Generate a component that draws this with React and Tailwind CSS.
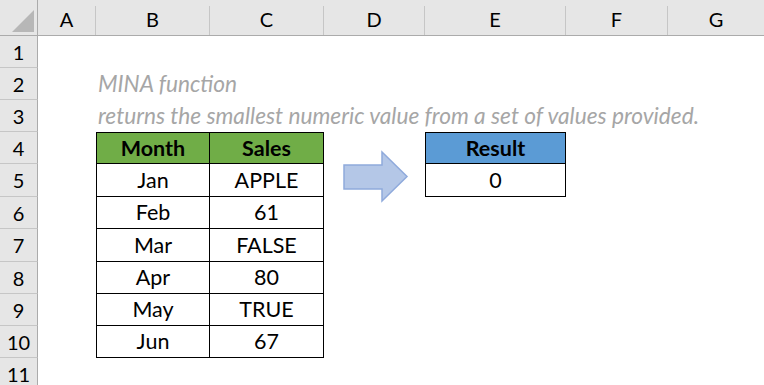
import React from 'react';

const font = { fontFamily: '"Lato", "Liberation Sans", sans-serif' };

// column widths in px, G takes whatever is left
const cols = [
    { name: 'A', w: 'w-[58px]' },
    { name: 'B', w: 'w-[114px]' },
    { name: 'C', w: 'w-[114px]' },
    { name: 'D', w: 'w-[101px]' },
    { name: 'E', w: 'w-[141px]' },
    { name: 'F', w: 'w-[102px]' },
];

const rowHeights = ['h-[32px]', 'h-[32px]', 'h-[32px]', 'h-[32px]', 'h-[33px]', 'h-[32px]', 'h-[33px]', 'h-[32px]', 'h-[32px]', 'h-[32px]', 'h-[32px]'];

const sales = [
    ['Jan', 'APPLE'],
    ['Feb', '61'],
    ['Mar', 'FALSE'],
    ['Apr', '80'],
    ['May', 'TRUE'],
    ['Jun', '67'],
];

const ColumnHeader = () => (
    <div className="flex h-[36px] bg-[#e6e6e6] border-b border-[#ababab]">
        <div className="w-[38px] shrink-0 flex items-start justify-end pt-[10px] pr-[3px] border-r border-[#ababab]">
            <svg width="22" height="22" viewBox="0 0 22 22">
                <polygon points="22,0 22,22 0,22" fill="#b7b7b7" />
            </svg>
        </div>
        {cols.map((c) => (
            <div key={c.name} className={`${c.w} shrink-0 flex`}>
                <div className="flex-1 flex items-center justify-center text-[20px] text-black pt-[2px]">{c.name}</div>
                <div className="w-px self-end h-[29px] bg-[#c6c6c6]" />
            </div>
        ))}
        <div className="flex-1 flex items-center justify-center text-[20px] text-black pt-[2px]">G</div>
    </div>
);

const RowNum = ({ n }) => (
    <div className="w-[38px] shrink-0 bg-[#e6e6e6] border-r border-b border-r-[#ababab] border-b-[#c6c6c6] flex items-center justify-center text-[20px] text-black">
        {n}
    </div>
);

const Cell = ({ w, className = '', children }) => (
    <div className={`${w} shrink-0 flex items-center justify-center ${className}`}>{children}</div>
);

export default function App() {
    const renderRow = (i) => {
        const n = i + 1;
        const h = rowHeights[i];

        if (n === 2 || n === 3) {
            return (
                <div key={n} className={`flex ${h}`}>
                    <RowNum n={n} />
                    <div className="w-[58px] shrink-0" />
                    <div className="flex-1 flex items-center pl-[2px] italic text-[#a6a6a6] text-[22.7px] whitespace-nowrap">
                        {n === 2 ? 'MINA function' : 'returns the smallest numeric value from a set of values provided.'}
                    </div>
                </div>
            );
        }

        let b = null;
        let c = null;
        let e = null;

        if (n === 4) {
            b = <Cell w="w-[114px]" className="bg-[#70ad47] border border-black font-bold text-[21.5px]">Month</Cell>;
            c = <Cell w="w-[114px]" className="bg-[#70ad47] border-t border-r border-b border-black font-bold text-[21.5px]">Sales</Cell>;
            e = <Cell w="w-[141px]" className="bg-[#5b9bd5] border border-black font-bold text-[21.5px]">Result</Cell>;
        } else if (n >= 5 && n <= 10) {
            const [m, s] = sales[n - 5];
            b = <Cell w="w-[114px]" className="border-l border-r border-b border-black text-[21.5px]">{m}</Cell>;
            c = <Cell w="w-[114px]" className="border-r border-b border-black text-[21.5px]">{s}</Cell>;
            if (n === 5) {
                e = <Cell w="w-[141px]" className="border-l border-r border-b border-black text-[21.5px]">0</Cell>;
            }
        }

        return (
            <div key={n} className={`flex ${h}`}>
                <RowNum n={n} />
                <div className="w-[58px] shrink-0" />
                {b || <div className="w-[114px] shrink-0" />}
                {c || <div className="w-[114px] shrink-0" />}
                <div className="w-[101px] shrink-0" />
                {e || <div className="w-[141px] shrink-0" />}
                <div className="flex-1" />
            </div>
        );
    };

    return (
        <div className="relative w-[764px] h-[385px] overflow-hidden bg-white text-black" style={font}>
            <ColumnHeader />
            {rowHeights.map((_, i) => renderRow(i))}

            {/* block arrow shape floating over the sheet */}
            <svg className="absolute left-[343px] top-[150px]" width="66" height="54" viewBox="0 0 66 54">
                <polygon
                    points="1,15 39,15 39,2 64,26.5 39,51 39,39 1,39"
                    fill="#b4c7e7"
                    stroke="#8faadc"
                    strokeWidth="1.5"
                />
            </svg>
        </div>
    );
}
